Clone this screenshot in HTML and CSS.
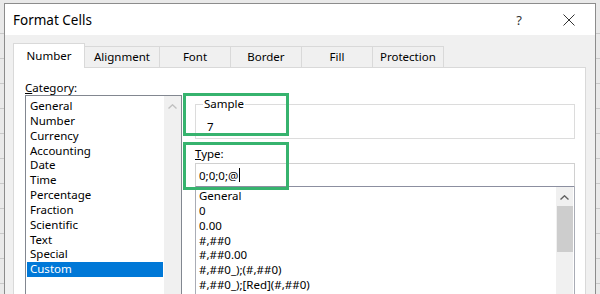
FILE: index.html
```html
<!DOCTYPE html>
<html lang="en">
  <head>
    <meta charset="utf-8" />
    <title>Format Cells</title>
    <link rel="stylesheet" href="styles.css">
  </head>
  <body>
    <div class="dialog">
      <div class="titlebar">
        <span class="title">Format Cells</span>
        <span class="help">?</span>
        <svg class="close" width="12" height="12" viewBox="0 0 12 12">
          <path d="M0.5 0.5 L11.5 11.5 M11.5 0.5 L0.5 11.5" stroke="#333" stroke-width="1" fill="none" />
        </svg>
      </div>

      <div class="tabs">
        <div class="tab active">Number</div>
        <div class="tab">Alignment</div>
        <div class="tab">Font</div>
        <div class="tab">Border</div>
        <div class="tab">Fill</div>
        <div class="tab">Protection</div>
      </div>

      <div class="panel">
        <div class="category">
          <div class="label"><u>C</u>ategory:</div>
          <div class="listbox">
            <ul class="items">
              <li>General</li>
              <li>Number</li>
              <li>Currency</li>
              <li>Accounting</li>
              <li>Date</li>
              <li>Time</li>
              <li>Percentage</li>
              <li>Fraction</li>
              <li>Scientific</li>
              <li>Text</li>
              <li>Special</li>
              <li class="selected">Custom</li>
            </ul>
            <div class="scrollbar">
              <svg class="arrow disabled" width="9" height="5" viewBox="0 0 9 5">
                <path d="M0.5 4.5 L4.5 0.8 L8.5 4.5" stroke="currentColor" stroke-width="1.4" fill="none" />
              </svg>
            </div>
          </div>
        </div>

        <div class="format">
          <fieldset class="sample">
            <legend>Sample</legend>
            <div class="sample-value">7</div>
          </fieldset>
          <div class="label"><u>T</u>ype:</div>
          <div class="type-input">0;0;0;@<span class="caret"></span></div>
          <div class="listbox type-list">
            <ul class="items">
              <li>General</li>
              <li>0</li>
              <li>0.00</li>
              <li>#,##0</li>
              <li>#,##0.00</li>
              <li>#,##0_);(#,##0)</li>
              <li>#,##0_);[Red](#,##0)</li>
            </ul>
            <div class="scrollbar">
              <svg class="arrow" width="9" height="5" viewBox="0 0 9 5">
                <path d="M0.5 4.5 L4.5 0.8 L8.5 4.5" stroke="currentColor" stroke-width="1.4" fill="none" />
              </svg>
              <div class="thumb"></div>
            </div>
          </div>
        </div>

        <!-- annotation boxes drawn over the dialog -->
        <div class="highlight highlight-sample"></div>
        <div class="highlight highlight-type"></div>
      </div>
    </div>
  </body>
</html>
```

FILE: styles.css
```css
html,
body {
  width: 100%;
  height: 100%;
}

body {
  margin: 0;
  overflow: hidden;
  font-family: "Noto Sans", sans-serif;
  font-size: 11.5px;
  color: #000;
  background-color: #e9e9e9;
  background-image: repeating-linear-gradient(to bottom, transparent 0, transparent 24px, #c9c9c9 24px, #c9c9c9 25px);
  background-position: 0 9px;
}

ul {
  margin: 0;
  padding: 0;
  list-style: none;
}

.dialog {
  display: flex;
  flex-direction: column;
  box-sizing: border-box;
  height: calc(100% - 3px);
  margin: 3px 4px 0 4px;
  border: 1px solid #8c8c8c;
  border-bottom: none;
  background-color: #f0f0f0;
  overflow: hidden;
}

.titlebar {
  display: flex;
  align-items: center;
  height: 31px;
  padding-left: 8px;
  background-color: #fff;
}

.title {
  flex: 1;
  font-size: 13.5px;
}

.help {
  font-size: 13px;
  color: #333;
  margin-right: 41px;
}

.close {
  margin-right: 20px;
}

.tabs {
  display: flex;
  align-items: flex-end;
  margin: 8px 0 0 8px;
}

.tab {
  height: 20px;
  line-height: 20px;
  padding: 0 9px;
  min-width: 52px;
  text-align: center;
  border: 1px solid #d9d9d9;
  border-bottom: none;
  margin-left: -1px;
  background-color: #f0f0f0;
}

.tab:first-child {
  margin-left: 0;
}

.tab:last-child {
  padding: 0 7px;
}

.tab.active {
  position: relative;
  z-index: 1;
  height: 24px;
  line-height: 24px;
  margin-bottom: -1px;
  background-color: #fff;
}

.panel {
  position: relative;
  flex: 1;
  min-height: 0;
  display: flex;
  gap: 13px;
  margin: 0 9px 0 8px;
  padding: 12px 0 0 11px;
  border: 1px solid #d9d9d9;
  border-bottom: none;
  background-color: #fff;
}

.label {
  line-height: 15px;
}

.category {
  display: flex;
  flex-direction: column;
  width: 157px;
}

.listbox {
  flex: 1;
  min-height: 0;
  display: flex;
  border: 1px solid #828790;
  border-bottom: none;
  overflow: hidden;
}

.listbox .items {
  flex: 1;
  padding: 3px 1px 0 1px;
}

.listbox .items li {
  line-height: 14.85px;
  padding-left: 3px;
  white-space: nowrap;
}

.listbox .items li.selected {
  background-color: #0078d7;
  color: #fff;
}

.scrollbar {
  width: 17px;
  display: flex;
  flex-direction: column;
  align-items: center;
  background-color: #f0f0f0;
  color: #606060;
}

.scrollbar .arrow {
  margin-top: 8px;
}

.scrollbar .arrow.disabled {
  color: #c0c0c0;
}

.scrollbar .thumb {
  width: 16px;
  height: 46px;
  margin-top: 6px;
  background-color: #cdcdcd;
}

.format {
  display: flex;
  flex-direction: column;
  width: 380px;
  padding-top: 18px;
}

.sample {
  margin: 0;
  padding: 0 7px 4px 7px;
  border: 1px solid #dcdcdc;
}

.sample legend {
  padding: 0 1px;
  line-height: 12px;
}

.sample-value {
  padding-left: 4px;
  margin-top: 9px;
  line-height: 15px;
}

.format .label {
  margin-top: 7px;
}

.type-input {
  display: flex;
  align-items: center;
  height: 22px;
  margin-top: 2px;
  padding-left: 3px;
  border: 1px solid #d0d0d0;
  border-bottom-color: #8c8fa0;
}

.caret {
  height: 14px;
  border-left: 1px solid #000;
  margin-left: 1px;
}

.type-list {
  border-top: none;
  border-color: #a9acb5;
}

.type-list .items {
  padding: 2px 0 0 0;
}

.type-list .scrollbar {
  margin-right: 1px;
}

.highlight {
  position: absolute;
  left: 169px;
  width: 106px;
  box-sizing: border-box;
  border: 3px solid #36b36e;
}

.highlight-sample {
  top: 25px;
  height: 43px;
}

.highlight-type {
  top: 74px;
  height: 48px;
}
```
